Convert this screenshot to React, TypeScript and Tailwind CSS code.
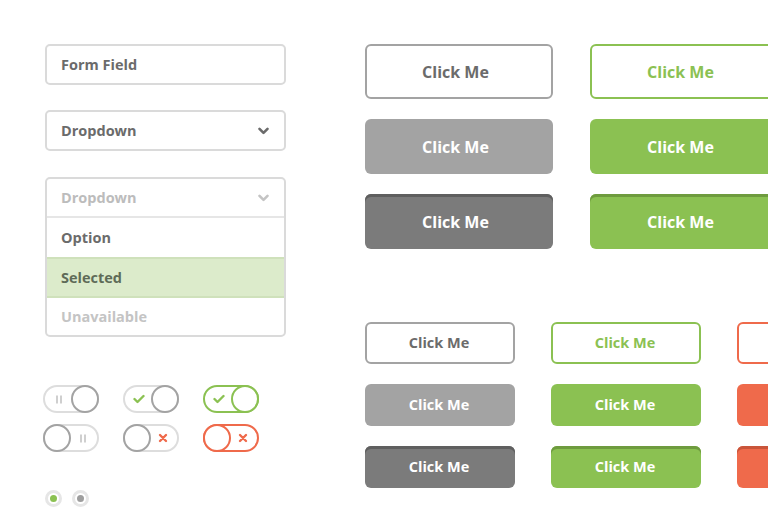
import React from "react";

const font = { fontFamily: '"Open Sans", "Liberation Sans", sans-serif' };

function Chevron({ color }: { color: string }) {
  return (
    <svg width="11" height="8" viewBox="0 0 11 8" fill="none">
      <path d="M1.5 1.8 L5.5 5.8 L9.5 1.8" stroke={color} strokeWidth="2.6" strokeLinecap="round" strokeLinejoin="round" />
    </svg>
  );
}

function Pause() {
  return (
    <svg width="8" height="9" viewBox="0 0 8 9">
      <rect x="1" y="0.5" width="2" height="8" fill="#cfcfcf" />
      <rect x="5" y="0.5" width="2" height="8" fill="#cfcfcf" />
    </svg>
  );
}

function Check() {
  return (
    <svg width="12" height="10" viewBox="0 0 12 10" fill="none">
      <path d="M1.5 5 L4.5 8 L10.5 2" stroke="#8bc152" strokeWidth="2.4" strokeLinecap="round" strokeLinejoin="round" />
    </svg>
  );
}

function Cross() {
  return (
    <svg width="10" height="10" viewBox="0 0 10 10" fill="none">
      <path d="M2 2 L8 8 M8 2 L2 8" stroke="#ef6a4b" strokeWidth="2.4" strokeLinecap="round" />
    </svg>
  );
}

type Tog = { on: boolean; track: string; knob: string; icon: React.ReactNode };

function Toggle({ on, track, knob, icon }: Tog) {
  return (
    <div className="relative w-[56px] h-[28px]">
      <div className="absolute inset-0 rounded-full border-2" style={{ borderColor: track }} />
      <div
        className={`absolute top-0 w-[28px] h-[28px] rounded-full border-2 bg-white ${on ? "right-0" : "left-0"}`}
        style={{ borderColor: knob }}
      />
      <div className={`absolute top-0 h-[28px] w-[28px] flex items-center justify-center ${on ? "left-[2px]" : "right-[2px]"}`}>
        {icon}
      </div>
    </div>
  );
}

function BigBtn({ kind }: { kind: string }) {
  const base = "w-[188px] h-[55px] rounded-[6px] flex items-center justify-center pr-[7px] text-[16px] font-bold";
  if (kind === "go") return <div className={`${base} border-2 border-[#a3a3a3] text-[#6b6b6b] bg-white`}>Click Me</div>;
  if (kind === "gf") return <div className={`${base} bg-[#a3a3a3] text-white`}>Click Me</div>;
  if (kind === "gd") return <div className={`${base} bg-[#7b7b7b] text-white shadow-[inset_0_3px_0_#5f5f5f]`}>Click Me</div>;
  if (kind === "no") return <div className={`${base} border-2 border-[#8bc152] text-[#8bc152] bg-white`}>Click Me</div>;
  if (kind === "nf") return <div className={`${base} bg-[#8bc152] text-white`}>Click Me</div>;
  return <div className={`${base} bg-[#8bc152] text-white shadow-[inset_0_3px_0_#6e9b3e]`}>Click Me</div>;
}

function SmallBtn({ kind }: { kind: string }) {
  const base = "w-[150px] h-[42px] rounded-[6px] flex items-center justify-center pr-[2px] text-[14.5px] font-bold shrink-0";
  switch (kind) {
    case "go": return <div className={`${base} border-2 border-[#a3a3a3] text-[#6b6b6b] bg-white`}>Click Me</div>;
    case "gf": return <div className={`${base} bg-[#a3a3a3] text-white`}>Click Me</div>;
    case "gd": return <div className={`${base} bg-[#7b7b7b] text-white shadow-[inset_0_3px_0_#5f5f5f]`}>Click Me</div>;
    case "no": return <div className={`${base} border-2 border-[#8bc152] text-[#8bc152] bg-white`}>Click Me</div>;
    case "nf": return <div className={`${base} bg-[#8bc152] text-white`}>Click Me</div>;
    case "nd": return <div className={`${base} bg-[#8bc152] text-white shadow-[inset_0_3px_0_#6e9b3e]`}>Click Me</div>;
    case "ro": return <div className={`${base} border-2 border-[#ef6a4b] text-[#ef6a4b] bg-white`}>Click Me</div>;
    case "rf": return <div className={`${base} bg-[#ef6a4b] text-white`}>Click Me</div>;
    default: return <div className={`${base} bg-[#ef6a4b] text-white shadow-[inset_0_3px_0_#c9553a]`}>Click Me</div>;
  }
}

export default function App() {
  return (
    <div className="w-[768px] h-[511px] overflow-hidden bg-white flex pt-[44px] pl-[45px]" style={font}>
      <div className="w-[241px] shrink-0 flex flex-col">
        <div className="h-[41px] rounded-[5px] border-2 border-[#dadada] flex items-center pl-[14px] text-[14.5px] font-bold text-[#6b6b6b]">
          Form Field
        </div>
        <div className="mt-[25px] h-[41px] rounded-[5px] border-2 border-[#dadada] flex items-center justify-between pl-[14px] pr-[15px] text-[14.5px] font-bold text-[#6b6b6b]">
          <span>Dropdown</span>
          <Chevron color="#6b6b6b" />
        </div>
        <div className="mt-[26px] h-[160px] rounded-[5px] border-2 border-[#dadada] flex flex-col overflow-hidden text-[14.5px] font-bold">
          <div className="h-[39px] flex items-center justify-between pl-[14px] pr-[15px] text-[#bcbcbc] border-b-2 border-[#e6e6e6]">
            <span>Dropdown</span>
            <Chevron color="#c4c4c4" />
          </div>
          <div className="h-[39px] flex items-center pl-[14px] text-[#6b6b6b]">Option</div>
          <div className="h-[41px] flex items-center pl-[14px] text-[#5f6b58] bg-[#dcebcb] border-y-2 border-[#cfe1bb]">Selected</div>
          <div className="flex-1 flex items-center pl-[14px] text-[#c4c4c4]">Unavailable</div>
        </div>
        <div className="mt-[48px] -ml-[2px] flex flex-col gap-[11px]">
          <div className="flex gap-[24px]">
            <Toggle on track="#dddddd" knob="#a3a3a3" icon={<Pause />} />
            <Toggle on track="#dddddd" knob="#a3a3a3" icon={<Check />} />
            <Toggle on track="#8bc152" knob="#8bc152" icon={<Check />} />
          </div>
          <div className="flex gap-[24px]">
            <Toggle on={false} track="#dddddd" knob="#a3a3a3" icon={<Pause />} />
            <Toggle on={false} track="#dddddd" knob="#a3a3a3" icon={<Cross />} />
            <Toggle on={false} track="#ef6a4b" knob="#ef6a4b" icon={<Cross />} />
          </div>
        </div>
        <div className="mt-[38px] flex gap-[10px]">
          <div className="w-[17px] h-[17px] rounded-full border-[3px] border-[#e6e6e6] flex items-center justify-center">
            <div className="w-[7px] h-[7px] rounded-full bg-[#8bc152]" />
          </div>
          <div className="w-[17px] h-[17px] rounded-full border-[3px] border-[#e6e6e6] flex items-center justify-center">
            <div className="w-[7px] h-[7px] rounded-full bg-[#9e9e9e]" />
          </div>
        </div>
      </div>
      <div className="ml-[79px] flex flex-col shrink-0">
        <div className="grid grid-cols-[188px_188px] gap-x-[37px] gap-y-[20px]">
          <BigBtn kind="go" />
          <BigBtn kind="no" />
          <BigBtn kind="gf" />
          <BigBtn kind="nf" />
          <BigBtn kind="gd" />
          <BigBtn kind="nd" />
        </div>
        <div className="mt-[73px] flex flex-col gap-[20px]">
          <div className="flex gap-[36px]">
            <SmallBtn kind="go" />
            <SmallBtn kind="no" />
            <SmallBtn kind="ro" />
          </div>
          <div className="flex gap-[36px]">
            <SmallBtn kind="gf" />
            <SmallBtn kind="nf" />
            <SmallBtn kind="rf" />
          </div>
          <div className="flex gap-[36px]">
            <SmallBtn kind="gd" />
            <SmallBtn kind="nd" />
            <SmallBtn kind="rd" />
          </div>
        </div>
      </div>
    </div>
  );
}
